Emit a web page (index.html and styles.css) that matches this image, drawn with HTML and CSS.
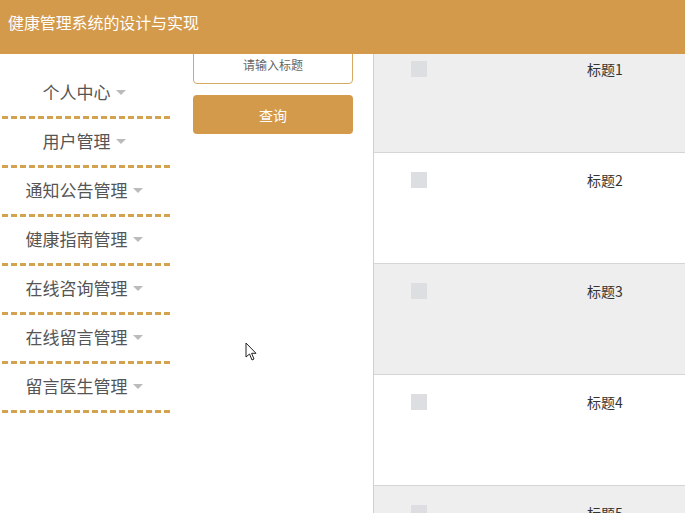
FILE: index.html
```html
<!DOCTYPE html>
<html lang="zh-CN">
<head>
    <meta charset="UTF-8">
    <meta name="viewport" content="width=device-width, initial-scale=1.0">
    <title>健康管理系统的设计与实现</title>
    <link rel="stylesheet" href="styles.css">
</head>
<body>
    <div class="header">
        <h1>健康管理系统的设计与实现</h1>
    </div>

    <div class="main">
        <!-- 左侧菜单 -->
        <ul class="menu">
            <li><span>个人中心</span><i class="caret"></i></li>
            <li><span>用户管理</span><i class="caret"></i></li>
            <li><span>通知公告管理</span><i class="caret"></i></li>
            <li><span>健康指南管理</span><i class="caret"></i></li>
            <li><span>在线咨询管理</span><i class="caret"></i></li>
            <li><span>在线留言管理</span><i class="caret"></i></li>
            <li><span>留言医生管理</span><i class="caret"></i></li>
        </ul>

        <!-- 搜索 -->
        <div class="search">
            <input type="text" placeholder="请输入标题">
            <button class="btn">查询</button>
            <svg class="cursor" width="14" height="20" viewBox="0 0 14 20">
                <path d="M1 1 L1 15 L4.5 12 L7 18 L9 17 L6.6 11.3 L11 11.3 Z" fill="#fff" stroke="#222" stroke-width="1"/>
            </svg>
        </div>

        <!-- 列表 -->
        <div class="list">
            <div class="row"><span class="check"></span><span class="title">标题1</span></div>
            <div class="row"><span class="check"></span><span class="title">标题2</span></div>
            <div class="row"><span class="check"></span><span class="title">标题3</span></div>
            <div class="row"><span class="check"></span><span class="title">标题4</span></div>
            <div class="row"><span class="check"></span><span class="title">标题5</span></div>
        </div>
    </div>
</body>
</html>
```

FILE: styles.css
```css
* {
    margin: 0;
    padding: 0;
    box-sizing: border-box;
    font-family: "Microsoft YaHei", "Noto Sans CJK SC", sans-serif;
}

body {
    background: #fff;
    color: #333;
    height: 513px;
    overflow: hidden;
}

.header {
    position: fixed;
    top: 0;
    left: 0;
    right: 0;
    height: 54px;
    background: #d39a4b;
    display: flex;
    align-items: center;
    padding-left: 8px;
    z-index: 10;
}

.header h1 {
    color: #fff;
    font-size: 16px;
    font-weight: normal;
    letter-spacing: -0.1px;
    margin-top: -10px;
}

/* 页面向下滚动了一点 */
.main {
    display: flex;
    margin-top: 42px;
}

.menu {
    list-style: none;
    width: 173px;
    padding-top: 28px;
}

.menu li {
    height: 49px;
    display: flex;
    justify-content: center;
    align-items: flex-start;
    padding: 10px 7px 0 0;
    margin-left: 2px;
    font-size: 17px;
    color: #555;
    background: repeating-linear-gradient(90deg, #d2a24e 0 6px, transparent 6px 9px) bottom left / 100% 3px no-repeat;
}

.menu li span {
    line-height: 24px;
}

.caret {
    display: inline-block;
    width: 0;
    height: 0;
    margin: 10px 0 0 5px;
    border-left: 5px solid transparent;
    border-right: 5px solid transparent;
    border-top: 5px solid #bbb;
}

.search {
    width: 200px;
    padding: 2px 20px 0;
    position: relative;
}

.search input {
    display: block;
    width: 160px;
    height: 40px;
    border: 1px solid #d4a963;
    border-radius: 4px;
    text-align: center;
    font-size: 12px;
    color: #666;
    outline: none;
}

.search input::placeholder {
    color: #666;
}

.btn {
    display: block;
    width: 160px;
    height: 39px;
    margin-top: 11px;
    border: none;
    border-radius: 4px;
    background: #d39a4b;
    color: #fff;
    font-size: 14px;
}

.cursor {
    position: absolute;
    left: 72px;
    top: 300px;
}

.list {
    flex: 1;
    border-left: 1px solid #d0d0d0;
}

.row {
    height: 111px;
    border-bottom: 1px solid #d5d5d5;
    display: flex;
    align-items: flex-start;
    padding-top: 19px;
}

.row:nth-child(odd) {
    background: #eeeeee;
}

.check {
    width: 16px;
    height: 16px;
    margin-left: 37px;
    background: #dcdee2;
}

.title {
    margin-left: 160px;
    font-size: 14px;
    color: #333;
    line-height: 16px;
}
```
